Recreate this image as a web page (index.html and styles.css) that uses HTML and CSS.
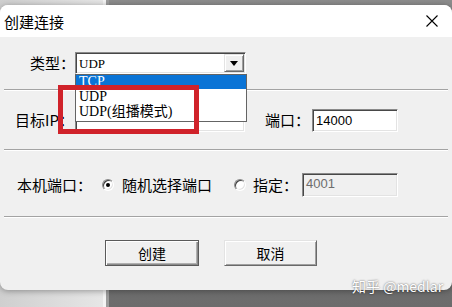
FILE: index.html
```html
<!DOCTYPE html>
<html lang="zh-CN">
<head>
<meta charset="utf-8">
<title>创建连接</title>
<link rel="stylesheet" href="styles.css">
</head>
<body>
<div class="dialog">
  <div class="titlebar">
    <span class="title">创建连接</span>
    <svg class="close" width="12" height="12" viewBox="0 0 12 12"><path d="M0.5 0.5 L11.5 11.5 M11.5 0.5 L0.5 11.5" stroke="#000" stroke-width="1.1" fill="none"/></svg>
  </div>
  <div class="content">
    <div class="row row-type">
      <span class="label lbl-type">类型：</span>
      <div class="combo">
        <span class="combo-value">UDP</span>
        <span class="combo-btn"><span class="arrow"></span></span>
        <ul class="dropdown">
          <li class="sel">TCP</li>
          <li>UDP</li>
          <li>UDP(组播模式)</li>
        </ul>
      </div>
    </div>
    <div class="sep"></div>
    <div class="row row-ip">
      <span class="label lbl-ip">目标IP：</span>
      <div class="field field-ip"></div>
      <span class="label lbl-port">端口：</span>
      <div class="field field-port">14000</div>
    </div>
    <div class="sep"></div>
    <div class="row row-local">
      <span class="label lbl-local">本机端口：</span>
      <span class="radio checked"></span>
      <span class="radio-text">随机选择端口</span>
      <span class="radio radio-2"></span>
      <span class="label lbl-fixed">指定：</span>
      <div class="field field-fixed">4001</div>
    </div>
    <div class="sep"></div>
    <div class="row row-buttons">
      <button class="btn btn-default">创建</button>
      <button class="btn btn-cancel">取消</button>
    </div>
  </div>
  <div class="highlight"></div>
</div>
<div class="watermark">知乎 @medlar</div>
</body>
</html>
```

FILE: styles.css
```css
html, body {
  margin: 0;
  padding: 0;
}
body {
  width: 452px;
  height: 307px;
  overflow: hidden;
  position: relative;
  font-family: "Noto Sans CJK SC", "Noto Sans", sans-serif;
  background:
    linear-gradient(to right, transparent 0 103px, #f4f4f4 103px 106px, #9c9c9c 106px 109px, transparent 109px),
    linear-gradient(to bottom, #8c8c8c 0, #6c6c6c 100%) 109px 0 / 343px 100% no-repeat,
    linear-gradient(to right, #cfcfcf 0, #e6e6e6 103px) 0 0 / 103px 100% no-repeat;
}
.dialog {
  position: relative;
  margin-top: 5px;
  width: 452px;
  height: 285px;
  border-radius: 8px;
  background: #f0f0f0;
  box-shadow: 0 1px 6px rgba(0, 0, 0, 0.35);
  overflow: hidden;
}
.titlebar {
  height: 32px;
  background: #fff;
  display: flex;
  align-items: center;
  justify-content: space-between;
  padding: 0 14px 0 4px;
}
.title {
  font-size: 15px;
  line-height: 15px;
  color: #000;
}
.close {
  display: block;
}
.content {
  padding: 0 4px;
}
.row {
  display: flex;
  align-items: center;
  box-sizing: border-box;
}
.row-type { height: 52px; }
.row-ip { height: 58px; }
.row-local { height: 65px; padding-top: 3px; }
.row-buttons { height: 72px; align-items: flex-start; padding-top: 22px; }
.sep {
  border-top: 1px solid #a3a3a3;
  border-bottom: 1px solid #fff;
}
.label {
  flex: 0 0 auto;
  font-size: 15px;
  line-height: 20px;
  color: #000;
  white-space: nowrap;
}
.lbl-type { margin-left: 26px; width: 45px; }
.lbl-ip { margin-left: 11px; width: 60px; }
.lbl-port { margin-left: 20px; width: 47px; }
.lbl-local { margin-left: 13px; width: 85px; }
.lbl-fixed { margin-left: 7px; width: 49px; }

.combo {
  position: relative;
  box-sizing: border-box;
  width: 171px;
  height: 22px;
  padding: 1px;
  display: flex;
  background: #fff;
  border: 1px solid;
  border-color: #8a8a8a #fff #fff #8a8a8a;
  box-shadow: inset 1px 1px 0 #474747, inset -1px -1px 0 #e3e3e3;
}
.combo-value {
  flex: 1;
  padding-left: 2px;
  font-family: "Liberation Serif", serif;
  font-size: 13px;
  line-height: 19px;
  color: #000;
}
.combo-btn {
  box-sizing: border-box;
  width: 20px;
  height: 18px;
  display: flex;
  align-items: center;
  justify-content: center;
  background: #f0f0f0;
  border: 1px solid;
  border-color: #e3e3e3 #6a6a6a #6a6a6a #e3e3e3;
  box-shadow: inset 1px 1px 0 #fff, inset -1px -1px 0 #a0a0a0;
}
.arrow {
  width: 0;
  height: 0;
  border-top: 5px solid #000;
  border-left: 4.5px solid transparent;
  border-right: 4.5px solid transparent;
}
.dropdown {
  position: absolute;
  top: calc(100% + 1px);
  left: -1px;
  width: 172px;
  box-sizing: border-box;
  margin: 0;
  padding: 0 0 2px;
  list-style: none;
  background: #fff;
  border: 1px solid #646464;
  z-index: 2;
  font-family: "Liberation Serif", "Noto Sans CJK SC", serif;
  font-size: 14px;
  color: #000;
}
.dropdown li {
  height: 15px;
  line-height: 15px;
  padding-left: 3px;
  white-space: nowrap;
}
.dropdown li.sel {
  height: 14px;
  line-height: 14px;
  background: #0a74d6;
  color: #fff;
}
.field {
  flex: 0 0 auto;
  box-sizing: border-box;
  height: 23px;
  padding-left: 3px;
  display: flex;
  align-items: center;
  background: #fff;
  border: 1px solid;
  border-color: #8a8a8a #fff #fff #8a8a8a;
  box-shadow: inset 1px 1px 0 #474747, inset -1px -1px 0 #e3e3e3;
  font-family: "Liberation Sans", sans-serif;
  font-size: 13px;
  color: #000;
}
.field-ip { width: 170px; }
.field-port { width: 86px; }
.field-fixed {
  width: 96px;
  height: 24px;
  background: #f0f0f0;
  color: #6d6d6d;
  align-items: flex-start;
  padding-top: 2px;
}
.radio {
  flex: 0 0 auto;
  position: relative;
  box-sizing: border-box;
  width: 12px;
  height: 12px;
  border-radius: 50%;
  background: #fff;
  border: 1px solid;
  border-color: #8a8a8a #fff #fff #8a8a8a;
  box-shadow: inset 1px 1px 0 #404040, inset -1px -1px 0 #e3e3e3;
}
.radio.checked::after {
  content: "";
  position: absolute;
  left: 3px;
  top: 3px;
  width: 4px;
  height: 4px;
  border-radius: 50%;
  background: #000;
}
.radio-2 { margin-left: 22px; }
.radio-text {
  margin-left: 8px;
  font-size: 15px;
  line-height: 20px;
  white-space: nowrap;
}
.btn {
  box-sizing: border-box;
  height: 26px;
  padding: 0;
  margin: 0;
  background: #f0f0f0;
  font-family: "Noto Sans CJK SC", sans-serif;
  font-size: 14px;
  line-height: 20px;
  color: #000;
  border: 1px solid;
  border-color: #e3e3e3 #696969 #696969 #e3e3e3;
  box-shadow: inset 1px 1px 0 #fff, inset -1px -1px 0 #a0a0a0;
}
.btn-default {
  margin-left: 101px;
  width: 94px;
  border-color: #5a5a5a;
  box-shadow: inset 1px 1px 0 #fff, inset -1px -1px 0 #8a8a8a, inset -2px -2px 0 #b0b0b0;
}
.btn-cancel {
  margin-left: 25px;
  width: 93px;
}
.highlight {
  position: absolute;
  left: 58px;
  top: 80px;
  width: 141px;
  height: 49px;
  box-sizing: border-box;
  border: 5px solid #d0222a;
  z-index: 3;
}
.watermark {
  position: absolute;
  left: 352px;
  top: 279px;
  font-family: "Noto Sans CJK SC", sans-serif;
  font-size: 14px;
  line-height: 14px;
  color: #fff;
  white-space: nowrap;
  text-shadow: 0 0 2px rgba(0, 0, 0, 0.7);
}
```
